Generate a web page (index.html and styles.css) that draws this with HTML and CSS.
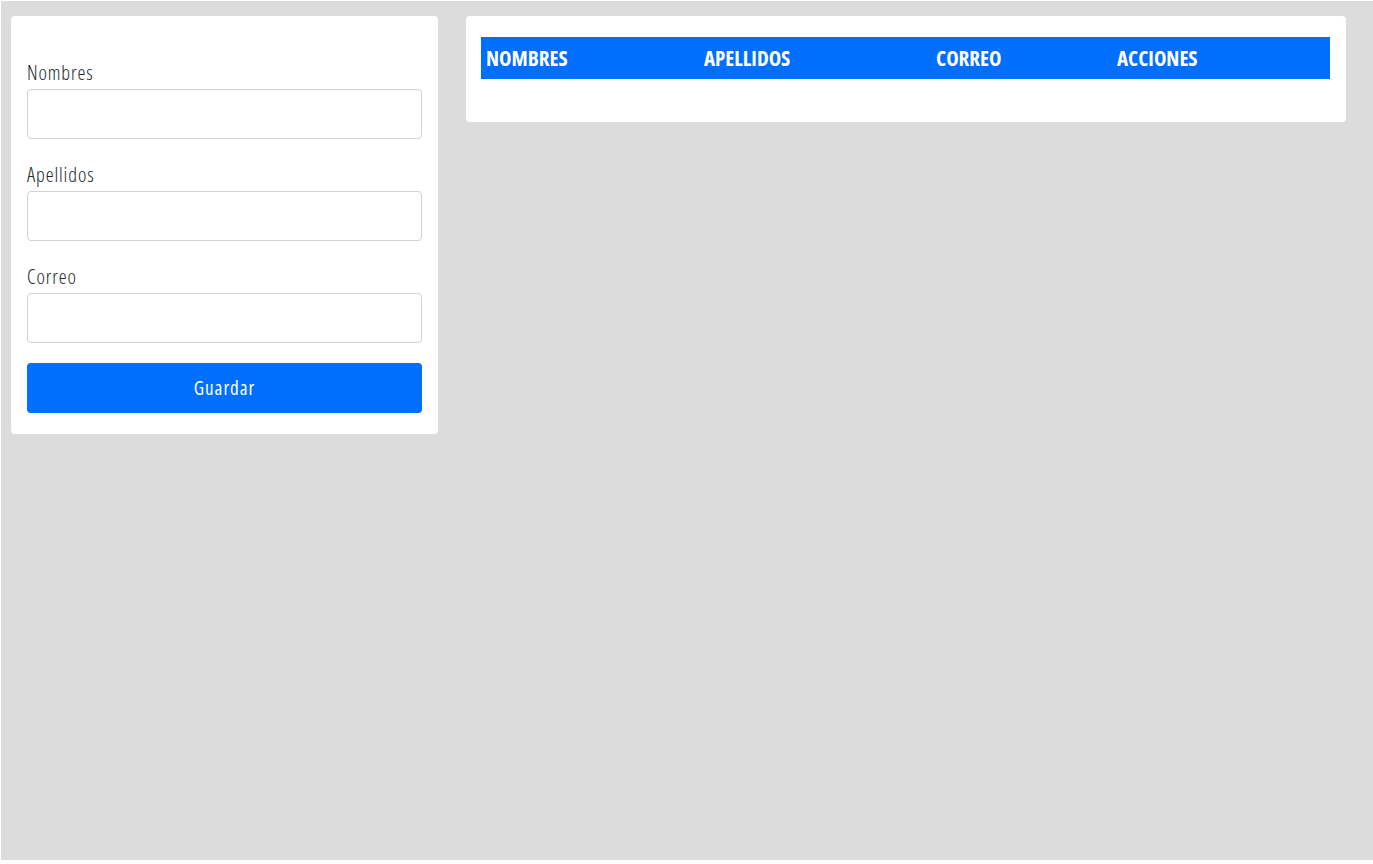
FILE: index.html
```html
<!DOCTYPE html>
<html lang="es">
<head>
    <meta charset="UTF-8">
    <meta name="viewport" content="width=device-width, initial-scale=1.0">
    <title>Usuarios</title>
    <link rel="stylesheet" href="styles.css">
</head>
<body>

<div class="app">

    <!-- Formulario -->
    <div class="card card-form">
        <form id="userForm">
            <div class="form-group">
                <label for="nombres">Nombres</label>
                <input type="text" id="nombres" name="nombres">
            </div>
            <div class="form-group">
                <label for="apellidos">Apellidos</label>
                <input type="text" id="apellidos" name="apellidos">
            </div>
            <div class="form-group last">
                <label for="correo">Correo</label>
                <input type="text" id="correo" name="correo">
            </div>
            <button type="submit" class="btn-guardar">Guardar</button>
        </form>
    </div>

    <!-- Tabla -->
    <div class="card card-table">
        <table class="users">
            <thead>
                <tr>
                    <th class="col-nombres">NOMBRES</th>
                    <th class="col-apellidos">APELLIDOS</th>
                    <th class="col-correo">CORREO</th>
                    <th class="col-acciones">ACCIONES</th>
                </tr>
            </thead>
            <tbody></tbody>
        </table>
    </div>

</div>

</body>
</html>
```

FILE: styles.css
```css
body {
    margin: 0;
    background-color: #fff;
    font-family: "Open Sans", "Noto Sans", sans-serif;
}

.app {
    margin: 1px 0 0 1px;
    height: 859px;
    background-color: #dcdcdc;
    display: grid;
    grid-template-columns: 427px 880px;
    column-gap: 28px;
    align-items: start;
    padding: 15px 0 0 10px;
    box-sizing: border-box;
}

.card {
    background-color: #fff;
    border-radius: 4px;
}

/* Form */
.card-form {
    padding: 45px 16px 21px 16px;
}

.form-group {
    margin-bottom: 24px;
}

.form-group.last {
    margin-bottom: 20px;
}

.form-group label {
    display: block;
    height: 24px;
    line-height: 24px;
    margin-bottom: 4px;
    font-size: 20px;
    font-weight: 300;
    font-stretch: condensed;
    letter-spacing: 0.9px;
    color: #212529;
}

.form-group input {
    display: block;
    width: 100%;
    height: 50px;
    box-sizing: border-box;
    border: 1px solid #ced4da;
    border-radius: 4px;
    padding: 6px 12px;
    font-size: 16px;
}

.btn-guardar {
    display: block;
    width: 100%;
    height: 50px;
    border: none;
    border-radius: 4px;
    background-color: #006ffd;
    color: #fff;
    font-family: "Open Sans", "Noto Sans", sans-serif;
    font-size: 19px;
    font-stretch: condensed;
    letter-spacing: 1px;
    cursor: pointer;
}

/* Table */
.card-table {
    padding: 21px 16px 43px 15px;
}

.users {
    width: 849px;
    border-collapse: collapse;
    table-layout: fixed;
}

.users th {
    box-sizing: border-box;
    height: 42px;
    padding: 0 0 0 5px;
    background-color: #006ffd;
    color: #fff;
    text-align: left;
    font-size: 21px;
    font-weight: 700;
    font-stretch: condensed;
}

.col-nombres { width: 218px; }
.col-apellidos { width: 232px; }
.col-correo { width: 181px; }
.col-acciones { width: 218px; }
```
